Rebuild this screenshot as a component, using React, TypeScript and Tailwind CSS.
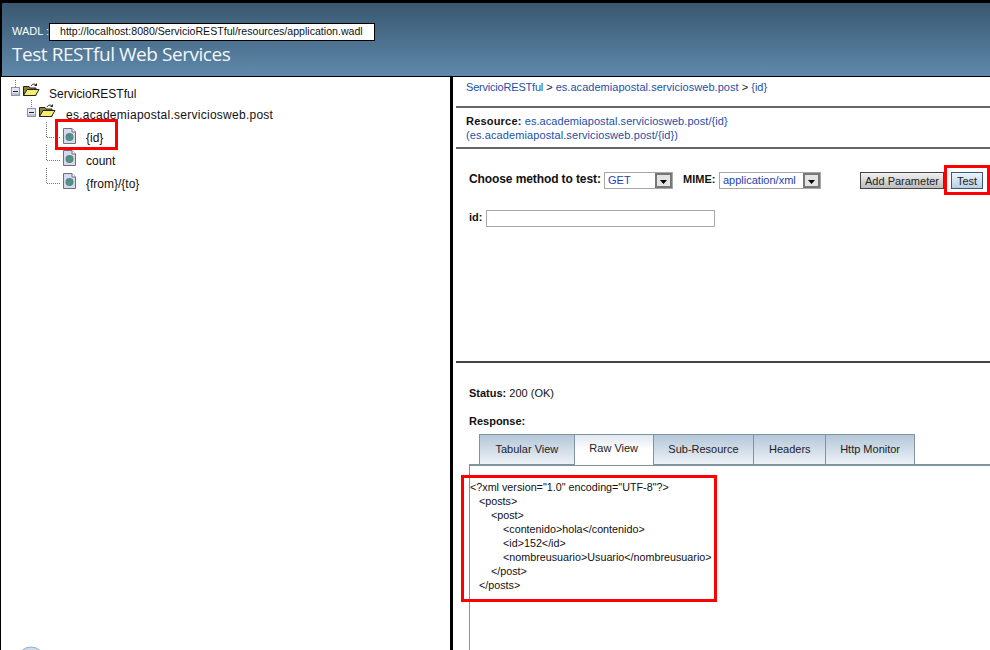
const Expander = ({ x, y }: { x: number; y: number }) => (
  <g>
    <rect x={x + 0.5} y={y + 0.5} width={8} height={8} fill="#e4e8f4" stroke="#8a93a8" />
    <rect x={x + 1} y={y + 6} width={7} height={2} fill="#c0c4d0" />
    <path d={`M${x + 2} ${y + 4.5}H${x + 7}`} stroke="#222" />
  </g>
);

const Folder = ({ x, y }: { x: number; y: number }) => (
  <g transform={`translate(${x} ${y})`}>
    <path d="M0.5 3.5H6L7 5H13V12.5H0.5Z" fill="#8f8430" stroke="#222" />
    <path d="M0.5 12.5L4 6.5H16L12.5 12.5Z" fill="#f7ee70" stroke="#222" />
    <path d="M8 3C9.5 0.5 12 0.5 13.5 2.5M13.5 2.5V0.5M13.5 2.5H11.5" fill="none" stroke="#222" />
  </g>
);

const Doc = ({ y }: { y: number }) => (
  <g transform={`translate(62 ${y})`}>
    <path d="M0.5 0.5H9L12.5 4V15.5H0.5Z" fill="#d8d8ee" stroke="#6f6f7a" />
    <path d="M9 0.5V4H12.5" fill="#fff" stroke="#6f6f7a" />
    <circle cx={6.5} cy={9} r={4} fill="#5a8398" />
    <path d="M4.5 9L6 11L9.5 6.5" fill="none" stroke="#3fae4a" strokeWidth={1.4} />
  </g>
);

const dots = { stroke: "#777", strokeDasharray: "1 1", fill: "none" };

const ResourceRow = ({ label, docY }: { label: string; docY: number }) => (
  <div className="flex h-[23px] items-center">
    <svg width="86" height="23" className="shrink-0 overflow-visible">
      <path d="M45.5 -4V11.5H60" {...dots} />
      <Doc y={docY} />
    </svg>
    <span className="-ml-px">{label}</span>
  </div>
);

const Combo = ({ value, w }: { value: string; w: string }) => (
  <div className={`flex h-[17px] items-center justify-between border border-[#a8a8a8] bg-white pl-[3px] text-[#1d3fb0] ${w}`}>
    <span>{value}</span>
    <span className="flex h-[15px] w-[17px] items-center justify-center border-2 border-[#777] bg-[#e4e4e4] pt-[3px]">
      <svg width="7" height="4"><path d="M0 0H7L3.5 4Z" fill="#000" /></svg>
    </span>
  </div>
);

const Tab = ({ label, w, active }: { label: string; w: string; active?: boolean }) => (
  <div
    className={`flex items-center justify-center border-l border-t border-[#7f949e] text-[#222] ${w} ${
      active
        ? "relative z-10 -mb-px h-[31px] bg-gradient-to-b from-[#dfe7ee] via-white to-white pb-[3px]"
        : "h-[30px] bg-gradient-to-b from-[#b4c7d9] to-[#eef2f6]"
    }`}
  >
    {label}
  </div>
);

const xml: [string, string][] = [
  ["pl-0", '<?xml version="1.0" encoding="UTF-8"?>'],
  ["pl-[9px]", "<posts>"],
  ["pl-[21px]", "<post>"],
  ["pl-[33px]", "<contenido>hola</contenido>"],
  ["pl-[33px]", "<id>152</id>"],
  ["pl-[33px]", "<nombreusuario>Usuario</nombreusuario>"],
  ["pl-[21px]", "</post>"],
  ["pl-[9px]", "</posts>"],
];

export default function App() {
  return (
    <div className="relative h-[650px] w-[990px] overflow-hidden bg-white font-['Liberation_Sans',Arial,sans-serif] text-[11px] text-black">
      {/* header */}
      <header className="h-[77px] border-b border-l-2 border-t-[3px] border-black bg-gradient-to-b from-[#3a5870] to-[#5f89ab] pl-[10px] pt-[20px]">
        <div className="flex h-[17px] items-center">
          <span className="w-[37px] whitespace-nowrap text-[11px] text-white">WADL :</span>
          <div className="flex h-[18px] w-[326px] items-center whitespace-nowrap border border-black bg-white pl-[10px] text-[10.6px] text-[#111]">
            http://localhost:8080/ServicioRESTful/resources/application.wadl
          </div>
        </div>
        <h1 className="mt-[1px] font-['Open_Sans',sans-serif] text-[19px] font-medium leading-[27px] tracking-[-0.45px] text-[#f2f6f9]">
          Test RESTful Web Services
        </h1>
      </header>

      <div className="flex h-[573px] border-l border-black">
        {/* tree */}
        <aside className="w-[449px] shrink-0 pt-[5px] text-[12px] text-[#111]">
          <div className="flex h-[22px] items-center">
            <svg width="49" height="22" className="shrink-0 overflow-visible">
              <path d="M14.5 -2V5" {...dots} />
              <Expander x={10} y={5} />
              <Folder x={22} y={1} />
            </svg>
            <span className="-ml-px mt-[2px]">ServicioRESTful</span>
          </div>
          <div className="flex h-[22px] items-center">
            <svg width="65" height="22" className="shrink-0 overflow-visible">
              <path d="M30.5 -4V4" {...dots} />
              <Expander x={26} y={4} />
              <Folder x={38} y={0} />
            </svg>
            <span className="tracking-[0.26px]">es.academiapostal.serviciosweb.post</span>
          </div>
          <ResourceRow label="{id}" docY={2} />
          <ResourceRow label="count" docY={1} />
          <ResourceRow label="{from}/{to}" docY={1} />
        </aside>

        {/* divider */}
        <div className="w-[3px] shrink-0 bg-black" />

        {/* detail */}
        <main className="min-w-0 flex-1 pl-[3px]">
          <div className="flex h-[31px] items-center border-b-2 border-[#666] pb-[13px] pl-[10px] pt-[4px] text-[#1d4fa8]">
            <span className="tracking-[-0.2px]">ServicioRESTful</span>&nbsp;<span className="text-[#222]">&gt;</span>&nbsp;<span className="tracking-[0.04px]">es.academiapostal.serviciosweb.post</span>&nbsp;<span className="text-[#222]">&gt;</span>&nbsp;<span>{"{id}"}</span>
          </div>
          <div className="h-[41px] border-b-2 border-[#666] pl-[10px] pt-[6px] leading-[14px] tracking-[0.06px] text-[#1d4fa8]">
            <div><b className="tracking-[0.2px] text-[#111]">Resource:</b> es.academiapostal.serviciosweb.post/{"{id}"}</div>
            <div className="tracking-[0.1px]">(es.academiapostal.serviciosweb.post/{"{id}"})</div>
          </div>

          <div className="h-[214px] border-b-2 border-[#444] pl-[13px] pt-[23px]">
            <div className="flex h-[17px] items-center">
              <b className="w-[135px] pb-[3px] text-[12px] tracking-[-0.1px] text-[#111]">Choose method to test:</b>
              <Combo value="GET" w="w-[69px]" />
              <b className="ml-[10px] w-[36px] pb-[3px] text-[#111]">MIME:</b>
              <Combo value="application/xml" w="w-[102px]" />
              <button className="ml-[39px] h-[17px] w-[84px] border border-[#444] bg-gradient-to-b from-[#f2f2f2] to-[#bcbcbc] text-[#222]">
                Add Parameter
              </button>
              <button className="ml-[7px] h-[17px] w-[32px] border border-[#3c5a78] bg-gradient-to-b from-[#eef4fa] to-[#b8d0e4] text-[#222]">
                Test
              </button>
            </div>
            <div className="mt-[21px] flex h-[17px] items-center">
              <b className="w-[17px] pb-[2px] text-[#111]">id:</b>
              <div className="h-[17px] w-[229px] border border-[#a8a8a8] bg-white" />
            </div>
          </div>

          <div className="pl-[13px]">
            <div className="mt-[23px] leading-[14px] text-[#111]">
              <b>Status:</b> 200 (OK)
            </div>
            <b className="mt-[14px] block leading-[14px] text-[#111]">Response:</b>
            <div className="mt-[6px] pl-[10px]">
              <div className="flex w-[436px] items-end border-r border-[#7f949e]">
                <Tab label="Tabular View" w="w-[95px]" />
                <Tab label="Raw View" active w="w-[79px]" />
                <Tab label="Sub-Resource" w="w-[101px]" />
                <Tab label="Headers" w="w-[72px]" />
                <Tab label="Http Monitor" w="w-[89px]" />
              </div>
            </div>
            <div className="h-[200px] border-l border-t-2 border-[#7f949e] pt-[14px] text-[10.75px] leading-[14px] text-[#111]">
              {xml.map(([pad, line]) => (
                <div key={line} className={pad}>{line}</div>
              ))}
            </div>
          </div>
        </main>
      </div>

      {/* annotations */}
      <div className="absolute left-[55px] top-[119px] h-[31px] w-[63px] border-[3px] border-[#ff0000]" />
      <div className="absolute left-[944px] top-[165px] h-[30px] w-[46px] border-[3px] border-[#ff0000]" />
      <div className="absolute left-[461px] top-[475px] h-[127px] w-[256px] border-[3px] border-[#ff0000]" />

      <svg width="30" height="5" className="absolute left-[16px] top-[645px]">
        <ellipse cx="15" cy="14" rx="13" ry="12" fill="#cfdcea" stroke="#8db0d0" />
      </svg>
    </div>
  );
}
